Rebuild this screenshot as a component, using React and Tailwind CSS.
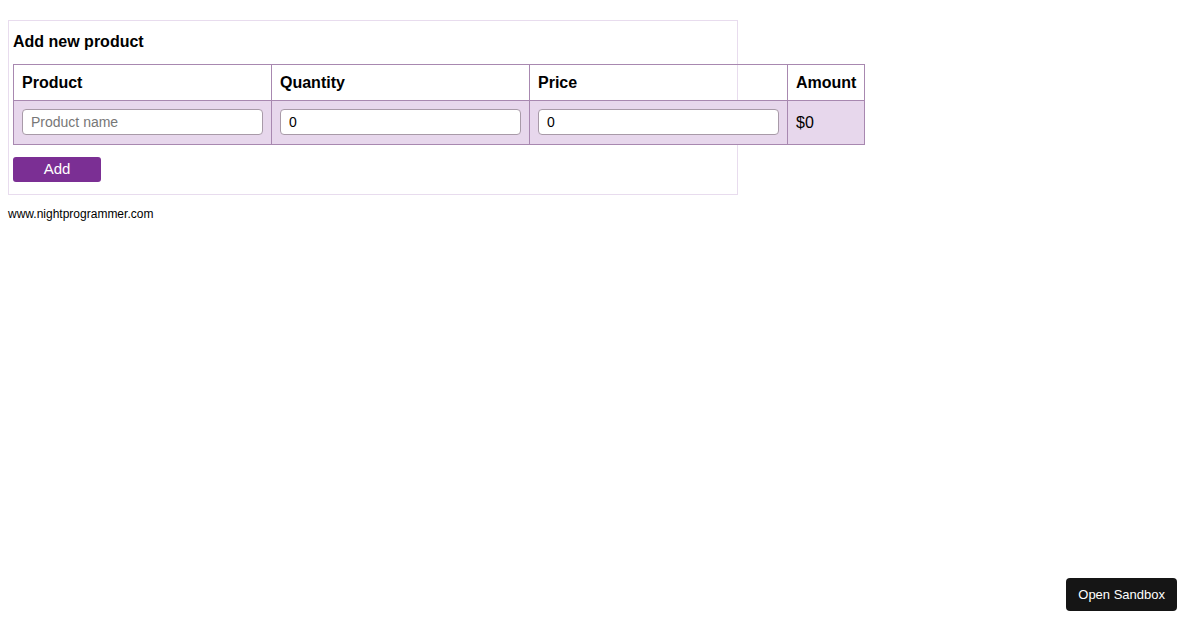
import { useState } from "react";

function App() {
  const [name, setName] = useState("");
  const [qty, setQty] = useState("0");
  const [price, setPrice] = useState("0");
  const amount = (Number(qty) || 0) * (Number(price) || 0);

  return (
    <div
      className="min-h-screen bg-white text-black relative"
      style={{ fontFamily: '"Liberation Sans", Arial, sans-serif' }}
    >
      <div className="px-2 pt-5">
        <div className="w-[730px] border border-[#e8dcee] px-1 pt-[10px] pb-[12px]">
          <h3 className="text-[16px] leading-[22px] font-bold mb-[11px]">Add new product</h3>
          <table className="table-fixed w-[852px] border-collapse border border-[#a888b0] text-[16px]">
            <thead>
              <tr className="h-[36px]">
                <th className="w-[258px] border border-[#a888b0] px-2 text-left font-bold">Product</th>
                <th className="w-[258px] border border-[#a888b0] px-2 text-left font-bold">Quantity</th>
                <th className="w-[258px] border border-[#a888b0] px-2 text-left font-bold">Price</th>
                <th className="border border-[#a888b0] px-2 text-left font-bold">Amount</th>
              </tr>
            </thead>
            <tbody>
              <tr className="h-[44px] bg-[#e7d7ec]">
                <td className="border border-[#a888b0] px-2 pb-px">
                  <input
                    className="block w-full h-[26px] bg-white border border-[#a89aa8] rounded-[4px] px-2 text-[14px] placeholder:text-[#777] outline-none"
                    placeholder="Product name"
                    value={name}
                    onChange={(e) => setName(e.target.value)}
                  />
                </td>
                <td className="border border-[#a888b0] px-2 pb-px">
                  <input
                    className="block w-full h-[26px] bg-white border border-[#a89aa8] rounded-[4px] px-2 text-[14px] outline-none"
                    value={qty}
                    onChange={(e) => setQty(e.target.value)}
                  />
                </td>
                <td className="border border-[#a888b0] px-2 pb-px">
                  <input
                    className="block w-full h-[26px] bg-white border border-[#a89aa8] rounded-[4px] px-2 text-[14px] outline-none"
                    value={price}
                    onChange={(e) => setPrice(e.target.value)}
                  />
                </td>
                <td className="border border-[#a888b0] px-2 text-[16px]">${amount}</td>
              </tr>
            </tbody>
          </table>
          <button className="block mt-[12px] w-[88px] h-[25px] bg-[#7b2f94] text-white text-[15px] rounded-[3px]">
            Add
          </button>
        </div>
        <div className="mt-[12px] text-[12px] leading-[14px]">www.nightprogrammer.com</div>
      </div>
      <button className="absolute right-[23px] top-[578px] h-[33px] px-[12px] bg-[#151515] text-white text-[13px] rounded-[4px]">
        Open Sandbox
      </button>
    </div>
  );
}

export default App;
